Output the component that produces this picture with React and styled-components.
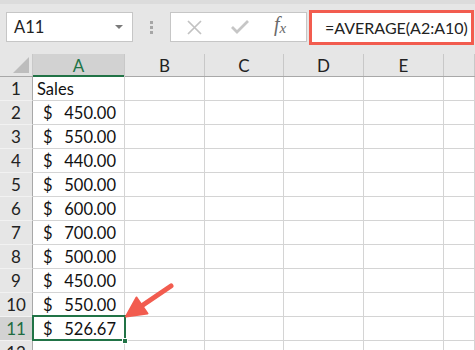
import styled, { createGlobalStyle } from "styled-components";

const GlobalStyle = createGlobalStyle`
  * { box-sizing: border-box; }
  body {
    margin: 0;
    background: #ffffff;
    font-family: Lato, "Liberation Sans", sans-serif;
  }
`;

const COLS = ["A", "B", "C", "D", "E", ""];
const TEMPLATE = "33px 92px 80px 79px 80px 80px 1fr";

const rows = [
  { n: 1, label: "Sales" },
  { n: 2, value: "450.00" },
  { n: 3, value: "550.00" },
  { n: 4, value: "440.00" },
  { n: 5, value: "500.00" },
  { n: 6, value: "600.00" },
  { n: 7, value: "700.00" },
  { n: 8, value: "500.00" },
  { n: 9, value: "450.00" },
  { n: 10, value: "550.00" },
  { n: 11, value: "526.67", selected: true },
  { n: 12 },
];

function App() {
  return (
    <Page>
      <GlobalStyle />
      <Toolbar>
        <NameBox>
          A11
          <Caret />
        </NameBox>
        <Grip>
          <span />
          <span />
          <span />
        </Grip>
        <FormulaButtons>
          <svg width="15" height="15" viewBox="0 0 15 15">
            <path d="M1 1 L14 14 M14 1 L1 14" stroke="#c2c2c2" strokeWidth="1.7" fill="none" />
          </svg>
          <svg width="18" height="14" viewBox="0 0 18 14">
            <path d="M1 7 L6 12 L17 1" stroke="#c6c6c6" strokeWidth="2.8" fill="none" />
          </svg>
          <Fx>
            f<sub>x</sub>
          </Fx>
        </FormulaButtons>
        <FormulaInput>=AVERAGE(A2:A10)</FormulaInput>
      </Toolbar>

      <Sheet>
        <HeaderRow>
          <Corner>
            <svg width="16" height="16" viewBox="0 0 16 16">
              <path d="M16 0 L16 16 L0 16 Z" fill="#bdbdbd" />
            </svg>
          </Corner>
          {COLS.map((c, i) => (
            <ColHead key={i} $active={c === "A"}>
              {c}
            </ColHead>
          ))}
        </HeaderRow>

        {rows.map((r) => (
          <Row key={r.n}>
            <RowHead $active={r.selected}>{r.n}</RowHead>
            <Cell $selected={r.selected}>
              {r.label}
              {r.value && (
                <>
                  <span>$</span>
                  <Amount>{r.value}</Amount>
                </>
              )}
              {r.selected && <Handle />}
            </Cell>
            <Cell />
            <Cell />
            <Cell />
            <Cell />
            <Cell />
          </Row>
        ))}
      </Sheet>

      <Arrow width="475" height="350" viewBox="0 0 475 350">
        <line x1="171" y1="286" x2="140" y2="307" stroke="#f25c4f" strokeWidth="5" strokeLinecap="round" />
        <path d="M126 316.5 L136.5 297.5 L147.5 313.5 Z" fill="#f25c4f" stroke="#f25c4f" strokeWidth="2" strokeLinejoin="round" />
      </Arrow>
    </Page>
  );
}

const Page = styled.div`
  position: relative;
  width: 475px;
  height: 350px;
  overflow: hidden;
  background: #fff;
`;

const Toolbar = styled.div`
  height: 54px;
  background: #e6e6e6;
  border-top: 4px solid #dcdcdc;
  display: flex;
  align-items: flex-start;
  padding: 6px 0 0 6px;
`;

const NameBox = styled.div`
  width: 127px;
  height: 30px;
  margin-top: 2px;
  background: #fff;
  border: 1px solid #c6c6c6;
  display: flex;
  align-items: center;
  justify-content: space-between;
  padding: 0 9px 0 7px;
  font-size: 16.5px;
  color: #222;
`;

const Caret = styled.span`
  width: 0;
  height: 0;
  border-left: 4px solid transparent;
  border-right: 4px solid transparent;
  border-top: 4px solid #7a7a7a;
`;

const Grip = styled.div`
  width: 37px;
  height: 30px;
  margin-top: 2px;
  display: flex;
  flex-direction: column;
  align-items: center;
  justify-content: center;
  gap: 2px;

  span {
    width: 3px;
    height: 3px;
    background: #a6a6a6;
  }
`;

const FormulaButtons = styled.div`
  width: 137px;
  height: 30px;
  margin-top: 2px;
  background: #fff;
  border: 1px solid #c6c6c6;
  display: flex;
  align-items: center;
  padding: 0 0 0 16px;
  gap: 27px;

  svg:nth-child(2) {
    margin-left: 2px;
  }
`;

const Fx = styled.span`
  font-family: "Liberation Serif", serif;
  font-style: italic;
  font-size: 20px;
  color: #6a6a6a;
  margin-left: -2px;
  margin-top: -4px;

  sub {
    font-size: 15px;
    vertical-align: -2px;
  }
`;

const FormulaInput = styled.div`
  margin-left: 2px;
  width: 165px;
  height: 35px;
  background: #fff;
  border: 3px solid #f25c4f;
  display: flex;
  align-items: center;
  padding-left: 13px;
  font-size: 16px;
  color: #222;
  white-space: nowrap;
`;

const Sheet = styled.div`
  display: flex;
  flex-direction: column;
`;

const HeaderRow = styled.div`
  display: grid;
  grid-template-columns: ${TEMPLATE};
  height: 23px;
  background: #e6e6e6;
  border-bottom: 1px solid #a8a8a8;
`;

const Corner = styled.div`
  display: flex;
  align-items: flex-end;
  justify-content: flex-end;
  padding: 0 3px 3px 0;
  border-right: 1px solid #c8c8c8;
`;

const ColHead = styled.div`
  display: flex;
  align-items: center;
  justify-content: center;
  font-size: 17px;
  color: ${(p) => (p.$active ? "#217346" : "#222")};
  background: ${(p) => (p.$active ? "#d2d2d2" : "transparent")};
  border-right: 1px solid #c8c8c8;
  box-shadow: ${(p) => (p.$active ? "inset 0 -2px 0 #217346" : "none")};
  margin-bottom: ${(p) => (p.$active ? "-1px" : "0")};
`;

const Row = styled.div`
  display: grid;
  grid-template-columns: ${TEMPLATE};
  height: 24px;
`;

const RowHead = styled.div`
  display: flex;
  align-items: center;
  justify-content: center;
  font-size: 17px;
  color: ${(p) => (p.$active ? "#1e6b41" : "#222")};
  background: ${(p) => (p.$active ? "#d2d2d2" : "#e6e6e6")};
  border-right: 1px solid #a8a8a8;
  border-bottom: 1px solid #f2f2f2;
`;

const Cell = styled.div`
  position: relative;
  display: flex;
  align-items: center;
  padding: 0 8px 0 4px;
  font-size: 16.5px;
  color: #111;
  border-right: 1px solid #d4d4d4;
  border-bottom: 1px solid #d4d4d4;

  span:first-child {
    margin-left: 6px;
  }

  ${(p) =>
    p.$selected &&
    `
    &::after {
      content: "";
      position: absolute;
      left: -1px;
      top: -2px;
      right: -2px;
      bottom: -1px;
      border: 2px solid #217346;
      pointer-events: none;
    }
  `}
`;

const Amount = styled.span`
  margin-left: auto;
`;

const Handle = styled.i`
  position: absolute;
  right: -4px;
  bottom: -4px;
  width: 6px;
  height: 6px;
  background: #217346;
  border: 1px solid #fff;
  z-index: 2;
`;

const Arrow = styled.svg`
  position: absolute;
  left: 0;
  top: 0;
  pointer-events: none;
`;

export default App;
